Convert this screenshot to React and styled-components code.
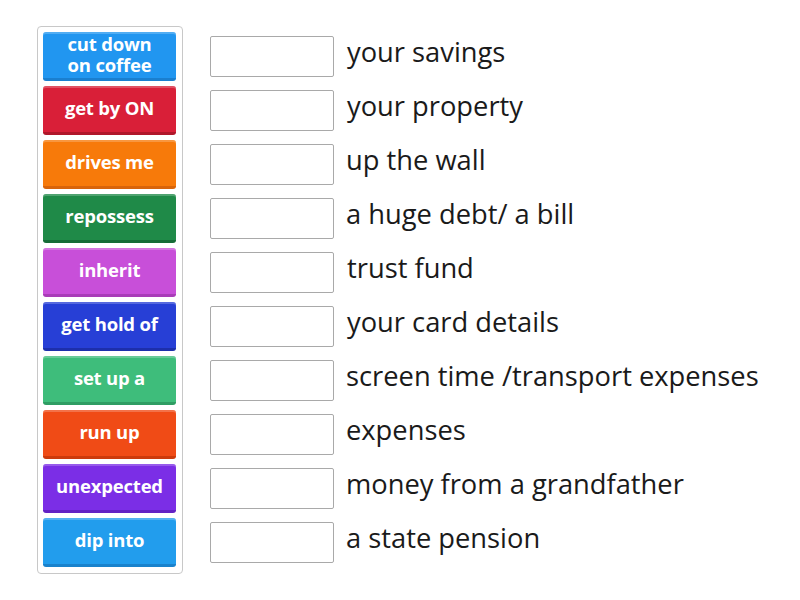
import React from "react";
import styled, { createGlobalStyle } from "styled-components";

const Global = createGlobalStyle`
  html, body { margin: 0; padding: 0; background: #fff; }
  body { font-family: "Open Sans", "Noto Sans", sans-serif; }
`;

const Page = styled.div`
  display: flex;
  align-items: flex-start;
  padding: 26px 0 0 37px;
  gap: 27px;
`;

const Tray = styled.div`
  display: flex;
  flex-direction: column;
  gap: 5px;
  padding: 5px 6px 6px 5px;
  border: 1px solid #c8c8c8;
  border-radius: 4px;
  width: 133px;
`;

const Tile = styled.div`
  height: 49px;
  box-sizing: border-box;
  border-radius: 3px;
  background: ${(p) => p.$c};
  border-bottom: 3px solid ${(p) => p.$d};
  box-shadow: inset 0 2px 0 rgba(255, 255, 255, 0.22);
  display: flex;
  align-items: center;
  justify-content: center;
  text-align: center;
  color: #fff;
  font-weight: 700;
  font-size: 18.5px;
  line-height: 21px;
  letter-spacing: -0.2px;
  padding-bottom: 3px;
`;

const Rows = styled.div`
  display: flex;
  flex-direction: column;
  gap: 13px;
  padding-top: 10px;
`;

const Row = styled.div`
  display: flex;
  align-items: center;
  gap: 12px;
  height: 41px;
`;

const Slot = styled.div`
  width: 124px;
  height: 41px;
  box-sizing: border-box;
  border: 1px solid #a9a9a9;
  border-radius: 2px;
  background: #fff;
  flex: none;
`;

const Label = styled.div`
  font-size: 27.3px;
  color: #1a1a1a;
  white-space: nowrap;
  margin-left: ${(p) => p.$shift || 0}px;
  margin-bottom: 10px;
`;

const tiles = [
  ["cut down\non coffee", "#2196f0", "#1a7fcf"],
  ["get by ON", "#d91f38", "#b0172b"],
  ["drives me", "#f77a0a", "#d8640a"],
  ["repossess", "#1f8a48", "#166b37"],
  ["inherit", "#c84fd9", "#a93cb8"],
  ["get hold of", "#273fd6", "#1d2fab"],
  ["set up a", "#3ebd7b", "#2f9d63"],
  ["run up", "#f04b16", "#cc3a0c"],
  ["unexpected", "#7b2ee6", "#6221c4"],
  ["dip into", "#229ded", "#1a82cc"],
];

const labels = [
  ["your savings", 1],
  ["your property", 1],
  ["up the wall", 0],
  ["a huge debt/ a bill", 0],
  ["trust fund", 1],
  ["your card details", 1],
  ["screen time /transport expenses", 0],
  ["expenses", 0],
  ["money from a grandfather", 0],
  ["a state pension", 0],
];

export default function App() {
  return (
    <>
      <Global />
      <Page>
        <Tray>
          {tiles.map(([t, c, d]) => (
            <Tile key={t} $c={c} $d={d}>
              <span>
                {t.split("\n").map((line, i) => (
                  <React.Fragment key={i}>
                    {i > 0 && <br />}
                    {line}
                  </React.Fragment>
                ))}
              </span>
            </Tile>
          ))}
        </Tray>
        <Rows>
          {labels.map(([l, s]) => (
            <Row key={l}>
              <Slot />
              <Label $shift={s}>{l}</Label>
            </Row>
          ))}
        </Rows>
      </Page>
    </>
  );
}
